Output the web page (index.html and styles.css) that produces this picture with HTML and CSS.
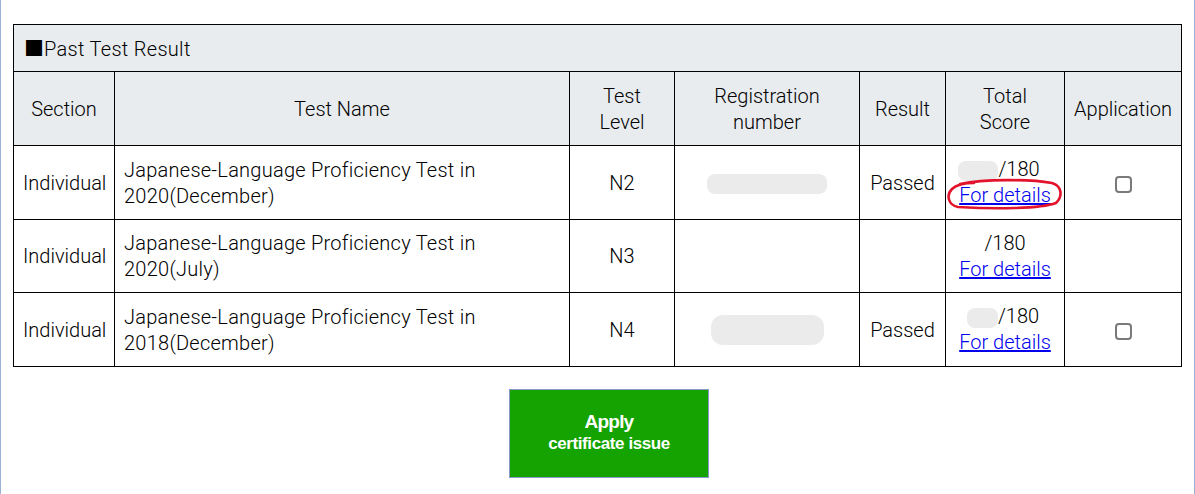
FILE: index.html
```html
<!DOCTYPE html>
<html>
<head>
<meta charset="utf-8">
<link rel="stylesheet" href="styles.css">
</head>
<body>
<div class="page">
  <table class="results">
    <colgroup>
      <col class="c-section"><col class="c-name"><col class="c-level"><col class="c-reg"><col class="c-result"><col class="c-score"><col class="c-app">
    </colgroup>
    <thead>
      <tr class="title-row"><th colspan="7" class="title"><span class="mark">■</span>Past Test Result</th></tr>
      <tr class="head-row">
        <th>Section</th>
        <th>Test Name</th>
        <th>Test<br>Level</th>
        <th>Registration<br>number</th>
        <th>Result</th>
        <th>Total<br>Score</th>
        <th>Application</th>
      </tr>
    </thead>
    <tbody>
      <tr class="r1">
        <td>Individual</td>
        <td class="name">Japanese-Language Proficiency Test in<br>2020(December)</td>
        <td class="center">N2</td>
        <td class="center"><span class="blur blur-reg1"></span></td>
        <td class="center">Passed</td>
        <td class="center score">
          <div><span class="blur blur-s1"></span>/180</div>
          <a href="#" class="details circled">For details
            <svg class="circle" width="120" height="32" viewBox="0 0 120 32"><path d="M16 6 C40 1, 85 1, 108 5 C118 8, 119 18, 112 25 C96 31, 50 31, 14 29 C4 27, 2 17, 8 11 C12 7, 20 5, 30 5" fill="none" stroke="#e2132b" stroke-width="2.6" stroke-linecap="round"/></svg>
          </a>
        </td>
        <td class="center"><input type="checkbox" class="check"></td>
      </tr>
      <tr class="r2">
        <td>Individual</td>
        <td class="name">Japanese-Language Proficiency Test in<br>2020(July)</td>
        <td class="center">N3</td>
        <td></td>
        <td></td>
        <td class="center score">
          <div>/180</div>
          <a href="#" class="details">For details</a>
        </td>
        <td></td>
      </tr>
      <tr class="r3">
        <td>Individual</td>
        <td class="name">Japanese-Language Proficiency Test in<br>2018(December)</td>
        <td class="center">N4</td>
        <td class="center"><span class="blur blur-reg3"></span></td>
        <td class="center">Passed</td>
        <td class="center score">
          <div><span class="blur blur-s3"></span>/180</div>
          <a href="#" class="details">For details</a>
        </td>
        <td class="center"><input type="checkbox" class="check"></td>
      </tr>
    </tbody>
  </table>
  <div class="actions">
    <button class="apply"><span class="l1">Apply</span><span class="l2">certificate issue</span></button>
  </div>
</div>
</body>
</html>
```
FILE: styles.css
```css
html, body {
  margin: 0;
  padding: 0;
  background: #fff;
}
.page {
  width: 1195px;
  height: 494px;
  border-left: 1px solid #9eb2d8;
  border-right: 1px solid #9eb2d8;
  padding-top: 24px;
  box-sizing: border-box;
}
.results {
  margin-left: 12px;
  border-collapse: collapse;
  table-layout: fixed;
  width: 1169px;
  font-family: Roboto, "Liberation Sans", sans-serif;
  font-weight: 300;
  font-size: 20px;
  color: #000;
}
.c-section { width: 101px; }
.c-name { width: 455px; }
.c-level { width: 105px; }
.c-reg { width: 185px; }
.c-result { width: 86px; }
.c-score { width: 119px; }
.c-app { width: 117px; }
.results th, .results td {
  border: 1px solid #000;
  padding: 0 9px;
  line-height: 26px;
  vertical-align: middle;
}
.results th {
  background: #e8ecef;
  font-weight: 300;
  text-align: center;
}
.results th.title {
  text-align: left;
  padding-left: 10px;
  letter-spacing: 0.3px;
}
.mark {
  font-family: "Noto Sans CJK JP", sans-serif;
  font-weight: 400;
  letter-spacing: 0;
}
.title-row { height: 47px; }
.head-row { height: 74px; }
.r1 { height: 74px; }
.r2 { height: 73px; }
.r3 { height: 74px; }
.results td.name { text-align: left; letter-spacing: 0.25px; }
.results td.center { text-align: center; }
.score { line-height: 25px; }
.score div { line-height: 25px; position: relative; }
.blur {
  display: inline-block;
  background: #ebebeb;
  border-radius: 8px;
  vertical-align: middle;
}
.blur-reg1 { width: 120px; height: 20px; }
.blur-reg3 { width: 113px; height: 30px; border-radius: 12px; }
.blur-s1 { width: 40px; height: 20px; margin-left: -12px; }
.blur-s3 { width: 31px; height: 20px; margin-left: -4px; }
.details {
  color: #0000ee;
  text-decoration: underline;
  position: relative;
  display: inline-block;
  line-height: 24px;
}
.circle {
  position: absolute;
  left: -15px;
  top: -5px;
  pointer-events: none;
}
.check {
  appearance: none;
  -webkit-appearance: none;
  width: 17px;
  height: 17px;
  border: 2px solid #7a7a7a;
  border-radius: 4px;
  background: #fff;
  margin: 0;
  vertical-align: middle;
  box-sizing: border-box;
}
.actions {
  display: flex;
  padding-left: 508px;
  margin-top: 22px;
}
.apply {
  width: 200px;
  height: 89px;
  background: #14a300;
  border: 1px solid #8a99c9;
  color: #fff;
  font-family: "Liberation Sans", Arial, sans-serif;
  font-weight: bold;
  display: flex;
  flex-direction: column;
  align-items: center;
  justify-content: center;
  padding: 0 0 3px 0;
}
.apply .l1 { font-size: 19px; line-height: 23px; letter-spacing: -0.8px; }
.apply .l2 { font-size: 17px; line-height: 22px; letter-spacing: -0.4px; }
```
